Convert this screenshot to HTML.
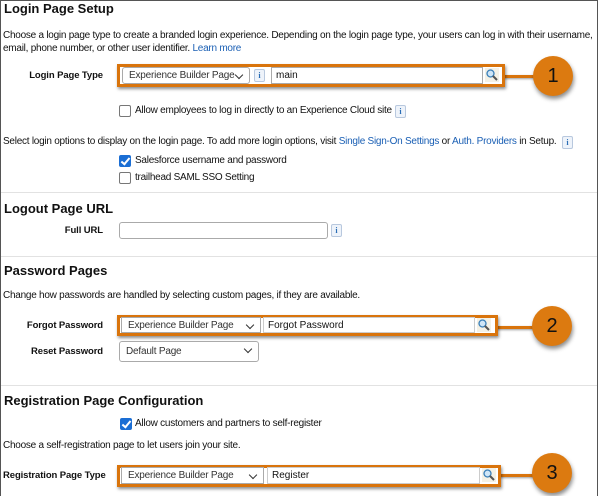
<!DOCTYPE html>
<html><head><style>
*{box-sizing:border-box;margin:0;padding:0}
body{width:600px;height:496px;background:#fff;font-family:"Liberation Sans",Arial,sans-serif;color:#111;position:relative;overflow:hidden}
.frame{position:absolute;left:0;top:0;width:598px;height:496px;border:1px solid #555;border-bottom:none}
.a{position:absolute;white-space:nowrap}
.h{font-size:13px;font-weight:bold;left:4px}
.p{font-size:10px;letter-spacing:-0.25px;left:3px}
.lb{font-size:9.5px;font-weight:bold;text-align:right;width:100px;letter-spacing:-0.1px}
.sep{position:absolute;left:1px;width:596px;height:1px;background:#e2e2e2}
a{color:#1a5fb4;text-decoration:none}
.ob{position:absolute;border:3px solid #d9740c;box-shadow:1px 2px 3px rgba(0,0,0,.45);background:#fff}
.sel{position:absolute;border:1px solid #aaa;border-radius:3px;font-size:10px;letter-spacing:-0.2px;color:#333;padding:2px 6px;background:#fff;white-space:nowrap;overflow:hidden}
.sel:after{content:"";position:absolute;right:7px;top:4px;width:5px;height:5px;border-right:1.5px solid #333;border-bottom:1.5px solid #333;transform:rotate(45deg)}
.inp{position:absolute;border:1px solid #aaa;background:#fff;font-size:10px;padding:2px 4px;color:#111;white-space:nowrap}
.inf{position:absolute;width:11px;height:13px;border:1px solid #b8c8de;background:#eef3fa;border-radius:2px;font-size:8px;color:#2a6db5;text-align:center;line-height:11px;font-weight:bold;font-family:"Liberation Serif",serif}
.cb{position:absolute;width:12px;height:12px;border:1px solid #777;border-radius:2px;background:#fff}
.cb.on{background:#1b6ed4;border-color:#1b6ed4}
.cb.on:after{content:"";position:absolute;left:3px;top:0px;width:3px;height:7px;border-right:2px solid #fff;border-bottom:2px solid #fff;transform:rotate(40deg)}
.c{position:absolute;width:40px;height:40px;border-radius:50%;background:#dc7a10;box-shadow:1px 3px 4px rgba(0,0,0,.45);font-size:20px;text-align:center;line-height:40px;color:#111}
.ln{position:absolute;height:3px;background:#d9740c;box-shadow:0 1px 2px rgba(0,0,0,.4)}
.srch{position:absolute;width:14px;height:14px}
</style></head><body>
<div class="frame"></div>

<div class="a h" style="top:1px">Login Page Setup</div>
<div class="a p" style="top:30px">Choose a login page type to create a branded login experience. Depending on the login page type, your users can log in with their username,</div>
<div class="a p" style="top:43px">email, phone number, or other user identifier. <a>Learn more</a></div>

<div class="a lb" style="left:3px;top:70px">Login Page Type</div>
<div class="ln" style="left:500px;top:75px;width:40px"></div>
<div class="ob" style="left:117px;top:64px;width:388px;height:23px"></div>
<div class="sel" style="left:122px;top:67px;width:128px;height:17px;line-height:12px">Experience Builder Page</div>
<div class="inf" style="left:254px;top:69px">i</div>
<div class="inp" style="left:271px;top:67px;width:212px;height:17px;line-height:12px">main</div>
<svg class="srch" style="left:485px;top:68px" viewBox="0 0 14 14"><rect width="14" height="14" fill="#f4f1e6"/><circle cx="5.5" cy="5.5" r="3.5" fill="#cfe6f7" stroke="#3a7fb8" stroke-width="1.3"/><path d="M8 8 L12 12" stroke="#555" stroke-width="2"/></svg>
<div class="c" style="left:533px;top:56px">1</div>

<div class="cb" style="left:119px;top:105px"></div>
<div class="a p" style="left:135px;top:105px">Allow employees to log in directly to an Experience Cloud site</div>
<div class="inf" style="left:395px;top:105px">i</div>

<div class="a p" style="top:136px">Select login options to display on the login page. To add more login options, visit <a>Single Sign-On Settings</a> or <a>Auth. Providers</a> in Setup.</div>
<div class="inf" style="left:562px;top:136px">i</div>

<div class="cb on" style="left:119px;top:155px"></div>
<div class="a p" style="left:135px;top:155px">Salesforce username and password</div>
<div class="cb" style="left:119px;top:172px"></div>
<div class="a p" style="left:135px;top:172px">trailhead SAML SSO Setting</div>

<div class="sep" style="top:192px"></div>
<div class="a h" style="top:201px">Logout Page URL</div>
<div class="a lb" style="left:3px;top:225px">Full URL</div>
<div class="inp" style="left:119px;top:222px;width:209px;height:17px;border-radius:3px"></div>
<div class="inf" style="left:331px;top:224px">i</div>

<div class="sep" style="top:256px"></div>
<div class="a h" style="top:263px">Password Pages</div>
<div class="a p" style="top:290px">Change how passwords are handled by selecting custom pages, if they are available.</div>

<div class="a lb" style="left:3px;top:320px">Forgot Password</div>
<div class="ln" style="left:495px;top:326px;width:45px"></div>
<div class="ob" style="left:117px;top:315px;width:381px;height:21px"></div>
<div class="sel" style="left:121px;top:317px;width:140px;height:16px;line-height:11px;border-radius:0">Experience Builder Page</div>
<div class="inp" style="left:263px;top:317px;width:212px;height:16px;line-height:11px;border-color:#ccc">Forgot Password</div>
<svg class="srch" style="left:477px;top:318px" viewBox="0 0 14 14"><rect width="14" height="14" fill="#f4f1e6"/><circle cx="5.5" cy="5.5" r="3.5" fill="#cfe6f7" stroke="#3a7fb8" stroke-width="1.3"/><path d="M8 8 L12 12" stroke="#555" stroke-width="2"/></svg>
<div class="c" style="left:532px;top:306px">2</div>

<div class="a lb" style="left:3px;top:346px">Reset Password</div>
<div class="sel" style="left:119px;top:341px;width:140px;height:21px;line-height:15px">Default Page</div>

<div class="sep" style="top:385px"></div>
<div class="a h" style="top:393px">Registration Page Configuration</div>
<div class="cb on" style="left:120px;top:418px"></div>
<div class="a p" style="left:135px;top:418px">Allow customers and partners to self-register</div>
<div class="a p" style="top:440px">Choose a self-registration page to let users join your site.</div>

<div class="a lb" style="left:3px;top:470px">Registration Page Type</div>
<div class="ln" style="left:497px;top:474px;width:43px"></div>
<div class="ob" style="left:117px;top:465px;width:384px;height:22px"></div>
<div class="sel" style="left:121px;top:467px;width:143px;height:17px;line-height:12px;border-radius:0">Experience Builder Page</div>
<div class="inp" style="left:267px;top:467px;width:213px;height:17px;line-height:12px;border-color:#ccc">Register</div>
<svg class="srch" style="left:482px;top:468px" viewBox="0 0 14 14"><rect width="14" height="14" fill="#f4f1e6"/><circle cx="5.5" cy="5.5" r="3.5" fill="#cfe6f7" stroke="#3a7fb8" stroke-width="1.3"/><path d="M8 8 L12 12" stroke="#555" stroke-width="2"/></svg>
<div class="c" style="left:532px;top:453px">3</div>
</body></html>
